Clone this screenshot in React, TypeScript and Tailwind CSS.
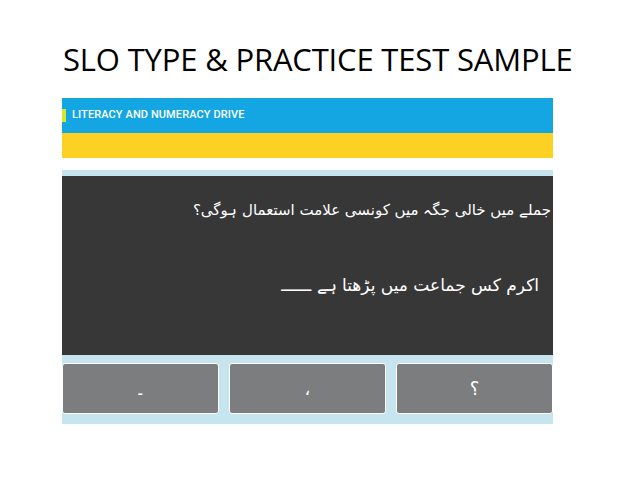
import React from "react";

export default function App() {
  return (
    <div className="w-[638px] h-[478px] bg-white overflow-hidden">
      <div className="pt-[39px] h-[98px] pl-[63px]">
        <h1 className="text-[31px] leading-[40px] text-black font-['Open_Sans',sans-serif] tracking-[-0.17px] whitespace-nowrap">
          SLO TYPE &amp; PRACTICE TEST SAMPLE
        </h1>
      </div>
      <div className="ml-[62px] w-[491px]">
        <div className="h-[35px] bg-[#13a6e2] flex items-center">
          <div className="w-[4px] h-[13px] bg-[#d6e82a] mr-[6px]" />
          <span className="text-white text-[11px] font-medium font-['Roboto',sans-serif] tracking-[0.1px]">
            LITERACY AND NUMERACY DRIVE
          </span>
        </div>
        <div className="h-[25px] bg-[#fdd024]" />
        <div className="h-[12px] bg-white" />
        <div className="h-[6px] bg-[#c6e5ef]" />
        <div
          dir="rtl"
          className="h-[179px] bg-[#373737] text-white font-['DejaVu_Sans',sans-serif] flex flex-col whitespace-nowrap"
        >
          <div className="pr-[2px] pt-[18px] text-[15px] leading-[32px]">
            جملے میں خالی جگہ میں کونسی علامت استعمال ہوگی؟
          </div>
          <div className="pr-[14px] pt-[43px] text-[17px] leading-[32px]">
            اکرم کس جماعت میں پڑھتا ہے ــــــ
          </div>
        </div>
        <div className="bg-[#c6e5ef] pt-[8px] pb-[10px] flex gap-[10px]">
          {["۔", "،", "؟"].map((c) => (
            <div
              key={c}
              className="flex-1 h-[51px] bg-[#7b7d7e] border border-white rounded-[3px] flex items-center justify-center text-white text-[18px] font-['DejaVu_Sans',sans-serif]"
            >
              {c}
            </div>
          ))}
        </div>
      </div>
    </div>
  );
}
